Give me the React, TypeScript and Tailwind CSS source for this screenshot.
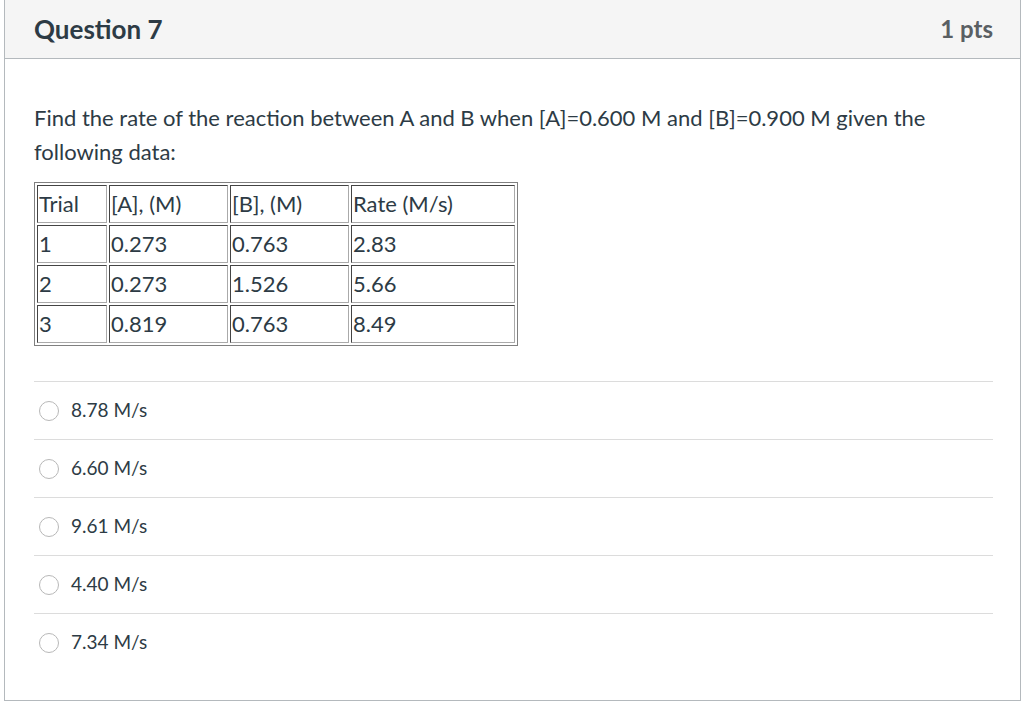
import React from "react";

const rows = [
  ["Trial", "[A], (M)", "[B], (M)", "Rate (M/s)"],
  ["1", "0.273", "0.763", "2.83"],
  ["2", "0.273", "1.526", "5.66"],
  ["3", "0.819", "0.763", "8.49"],
];
const widths = ["w-[70px]", "w-[119px]", "w-[119px]", "w-[164px]"];
const options = ["8.78 M/s", "6.60 M/s", "9.61 M/s", "4.40 M/s", "7.34 M/s"];

export default function App() {
  return (
    <div className="min-h-[702px] bg-white pl-[4px] pr-[3px] pb-[2px] text-[#2d3b45]" style={{ fontFamily: "Lato, 'Noto Sans', sans-serif" }}>
      <div className="border border-[#b4b9bd] border-t-0">
        <div className="flex h-[59px] items-center justify-between border-b border-[#b4b9bd] bg-[#f5f5f5] pl-[29px] pr-[27px]">
          <div className="text-[26px] font-bold leading-none">Question 7</div>
          <div className="text-[24px] font-bold leading-none text-[#5a5f63]">1 pts</div>
        </div>
        <div className="pl-[29px] pr-[27px] pt-[42px] pb-[29px]">
          <p className="text-[22px] leading-[34px] pr-[20px]">
            Find the rate of the reaction between A and B when [A]=0.600 M and [B]=0.900 M given the following data:
          </p>
          <table className="mt-[13px] border-separate border-spacing-[2px] border border-[#808080] text-[22px]">
            <tbody>
              {rows.map((r, i) => (
                <tr key={i}>
                  {r.map((c, j) => (
                    <td key={j} className={`${widths[j]} h-[38px] border border-l-[#444] border-t-[#444] border-r-[#aaa] border-b-[#aaa] px-[1px] leading-none align-middle`}>
                      {c}
                    </td>
                  ))}
                </tr>
              ))}
            </tbody>
          </table>
          <div className="mt-[35px]">
            {options.map((o) => (
              <div key={o} className="flex h-[58px] items-center border-t border-[#dcdcdc] pl-[5px]">
                <span className="h-[20px] w-[20px] rounded-full border border-[#b8b8b8] bg-white" />
                <span className="ml-[12px] text-[19px]">{o}</span>
              </div>
            ))}
          </div>
        </div>
      </div>
    </div>
  );
}
